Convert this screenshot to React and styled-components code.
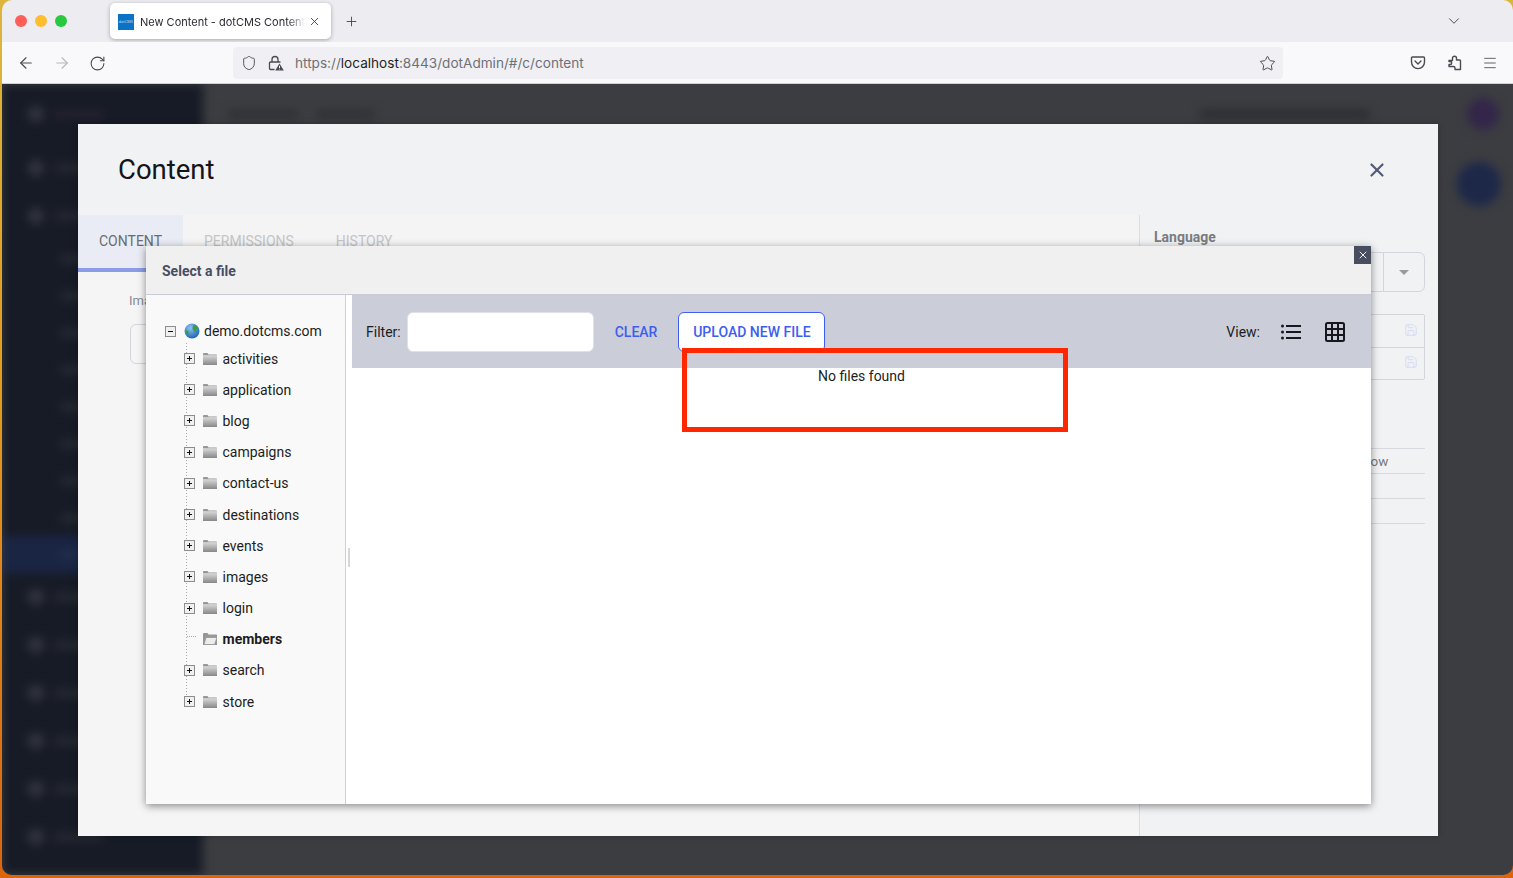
import React from 'react';
import styled, { createGlobalStyle } from 'styled-components';
import { ArrowLeft, ArrowRight, RotateCw, Shield, Star, Menu, Plus, X, ChevronDown, Save } from 'lucide-react';

const GlobalStyle = createGlobalStyle`
  html, body { margin: 0; padding: 0; height: 100%; overflow: hidden; }
  body {
    font-family: Roboto, "Liberation Sans", sans-serif;
    background: linear-gradient(180deg, #dcb63c 0%, #e39a22 45%, #d9650f 100%);
  }
  * { box-sizing: border-box; }
`;

const Screen = styled.div`
  width: 1513px;
  height: 878px;
  padding: 0 0 3px 2px;
`;

const BrowserWindow = styled.div`
  height: 100%;
  display: flex;
  flex-direction: column;
  border-radius: 10px;
  overflow: hidden;
`;

/* browser chrome */
const TabStrip = styled.div`
  height: 42px;
  flex: none;
  display: flex;
  align-items: center;
  background: #edecf1;
  padding: 0 50px 0 13px;
`;

const Light = styled.span`
  width: 12px;
  height: 12px;
  border-radius: 50%;
  margin-right: 8px;
  background: ${p => p.$color};
`;

const Tab = styled.div`
  width: 221px;
  height: 36px;
  margin: 0 13px 0 35px;
  padding: 1px 10px 0 8px;
  display: flex;
  align-items: center;
  background: #fff;
  border-radius: 5px;
  box-shadow: 0 1px 4px rgba(0, 0, 0, 0.3);
  color: #2b2a33;
`;

const Favicon = styled.span`
  width: 16px;
  height: 16px;
  flex: none;
  margin-right: 6px;
  background: #0b73c4;
  color: #bcdcf4;
  font-size: 4px;
  line-height: 16px;
  text-align: center;
  overflow: hidden;
`;

const TabTitle = styled.span`
  flex: 1;
  font-family: Inter, "Liberation Sans", sans-serif;
  font-size: 11px;
  white-space: nowrap;
  overflow: hidden;
  -webkit-mask-image: linear-gradient(90deg, #000 90%, transparent 100%);
  mask-image: linear-gradient(90deg, #000 90%, transparent 100%);
`;

const ChromeIcon = styled.span`
  display: flex;
  flex: none;
  color: ${p => p.$color || '#4a4a52'};
  margin-left: ${p => p.$left || 0}px;
`;

const Spacer = styled.div`
  flex: 1;
`;

const NavBar = styled.div`
  height: 42px;
  flex: none;
  display: flex;
  align-items: center;
  background: #f9f9fb;
  border-bottom: 1px solid #cfcfd4;
  padding: 1px 15px 0 15px;
`;

const UrlBar = styled.div`
  width: 1050px;
  height: 32px;
  margin-left: 127px;
  padding: 0 7px 0 8px;
  display: flex;
  align-items: center;
  background: #f0f0f4;
  border-radius: 4px;
`;

const UrlText = styled.span`
  margin-left: 11px;
  font-family: Inter, "Liberation Sans", sans-serif;
  font-size: 13.6px;
  color: #6f6f76;
  white-space: nowrap;
  b { font-weight: 400; color: #1f1f24; }
`;

/* blurred page behind the dialogs */
const Page = styled.div`
  flex: 1;
  position: relative;
  overflow: hidden;
  background: #3c3d41;
`;

const Backdrop = styled.div`
  height: 100%;
  display: flex;
  filter: blur(5px);
`;

const Sidebar = styled.div`
  width: 201px;
  flex: none;
  background: #171b26;
  padding-bottom: 14px;
`;

const SideRow = styled.div`
  height: ${p => p.$height}px;
  display: flex;
  align-items: center;
  padding-left: ${p => p.$indent}px;
  background: ${p => (p.$active ? '#1a2544' : 'transparent')};
`;

const Dot = styled.span`
  width: 16px;
  height: 16px;
  border-radius: 50%;
  margin-right: 10px;
  background: #32353d;
`;

const Bar = styled.span`
  height: 8px;
  width: ${p => p.$width}px;
  background: ${p => p.$color || '#262932'};
  margin-left: ${p => p.$left || 0}px;
`;

const MainArea = styled.div`
  flex: 1;
`;

const TopBar = styled.div`
  height: 60px;
  display: flex;
  align-items: center;
  padding: 0 14px 0 25px;
`;

const Avatar = styled.span`
  display: block;
  width: ${p => p.$size}px;
  height: ${p => p.$size}px;
  border-radius: 50%;
  background: ${p => p.$color};
`;

const SideAvatar = styled.div`
  display: flex;
  justify-content: flex-end;
  padding: 18px 12px 0 0;
`;

/* content modal */
const Modal = styled.div`
  position: absolute;
  left: 76px;
  top: 40px;
  width: 1360px;
  height: 712px;
  display: flex;
  flex-direction: column;
  background: #f1f2f4;
  box-shadow: 0 0 6px rgba(0, 0, 0, 0.25);
`;

const ModalHeader = styled.div`
  height: 91px;
  flex: none;
  display: flex;
  align-items: center;
  justify-content: space-between;
  padding: 0 50px 0 40px;
`;

const ModalTitle = styled.h1`
  margin: 0;
  font-size: 27.5px;
  font-weight: 400;
  color: #14151a;
`;

const ModalBody = styled.div`
  flex: 1;
  display: flex;
`;

const EditorColumn = styled.div`
  width: 1062px;
  flex: none;
  display: flex;
  flex-direction: column;
  background: #f5f5f5;
  border-right: 1px solid #dcdde2;
`;

const Tabs = styled.div`
  height: 57px;
  flex: none;
  display: flex;
  background: #f4f4f4;
`;

const TabItem = styled.div`
  padding: 18px 21px 0;
  font-size: 14px;
  color: ${p => (p.$active ? '#6b6c70' : '#c4c5c9')};
  background: ${p => (p.$active ? '#e9ecf5' : 'transparent')};
  border-bottom: 4px solid ${p => (p.$active ? '#8b9de8' : 'transparent')};
`;

const EditorForm = styled.div`
  padding: 21px 0 0 51px;
`;

const FieldLabel = styled.div`
  font-size: 13px;
  color: #8a8b90;
  margin-bottom: 16px;
`;

const FieldInput = styled.div`
  width: 300px;
  height: 40px;
  margin-left: 1px;
  background: #f5f5f5;
  border: 1px solid #d4d5dc;
  border-radius: 6px;
`;

const SidePanel = styled.div`
  flex: 1;
  padding: 14px 13px 0 14px;
`;

const PanelLabel = styled.div`
  font-size: 14px;
  font-weight: 700;
  color: #7b7c80;
  margin-bottom: 7px;
`;

const SelectBox = styled.div`
  height: 40px;
  display: flex;
  justify-content: flex-end;
  border: 1px solid #d4d5dc;
  border-radius: 6px;
  margin-bottom: 22px;
`;

const SelectArrow = styled.div`
  width: 41px;
  display: flex;
  align-items: center;
  justify-content: center;
  border-left: 1px solid #d4d5dc;
  &::after {
    content: '';
    border-left: 5px solid transparent;
    border-right: 5px solid transparent;
    border-top: 5px solid #999aa0;
  }
`;

const ActionBox = styled.div`
  border: 1px solid #d4d5dc;
  border-radius: 2px;
  margin-bottom: 68px;
`;

const ActionRow = styled.div`
  height: 32px;
  display: flex;
  align-items: center;
  justify-content: flex-end;
  padding: 0 6px 3px 0;
  color: #d0d9f5;
  & + & { border-top: 1px solid #d4d5dc; }
`;

const MetaRow = styled.div`
  height: 25px;
  padding-left: 178px;
  border-top: 1px solid #d8d9de;
  font-size: 13.5px;
  line-height: 25px;
  color: #77787c;
  white-space: nowrap;
  &:last-child { height: 1px; }
`;

/* select a file dialog */
const Dialog = styled.div`
  position: absolute;
  left: 68px;
  top: 122px;
  width: 1225px;
  height: 558px;
  display: flex;
  flex-direction: column;
  background: #fff;
  box-shadow: 0 2px 8px rgba(0, 0, 0, 0.45);
`;

const DialogTitle = styled.div`
  height: 49px;
  flex: none;
  padding: 2px 0 0 16px;
  display: flex;
  align-items: center;
  background: #f0f0f0;
  border-bottom: 1px solid #c9cbd6;
  font-size: 14px;
  font-weight: 700;
  color: #494d62;
`;

const DialogClose = styled.div`
  position: absolute;
  right: 0;
  top: 0;
  width: 17px;
  height: 18px;
  display: flex;
  align-items: center;
  justify-content: center;
  background: #494d60;
  color: #fff;
`;

const DialogBody = styled.div`
  flex: 1;
  display: flex;
  min-height: 0;
`;

const TreePane = styled.div`
  width: 200px;
  flex: none;
  padding-top: 24px;
  background: #f9f9f9;
  border-right: 1px solid #cfd0d8;
  color: #1c1d22;
  font-size: 14px;
`;

const TreeRoot = styled.div`
  height: 24px;
  padding-left: 19px;
  display: flex;
  align-items: center;
`;

const TreeList = styled.div`
  background:
    linear-gradient(#f9f9f9, #f9f9f9) no-repeat 0 100% / 100% 16px,
    linear-gradient(#a9a9a9 50%, transparent 50%) repeat-y 40px 0 / 1px 3px;
`;

const TreeRow = styled.div`
  height: 31.2px;
  padding-left: ${p => (p.$leaf ? 57 : 38)}px;
  display: flex;
  align-items: center;
  font-weight: ${p => (p.$open ? 700 : 400)};
`;

const LeafLine = styled.span`
  width: 9px;
  margin: -5px 7px 0 -16px;
  border-top: 1px dotted #a9a9a9;
`;

const SplitHandle = styled.div`
  width: 6px;
  flex: none;
  display: flex;
  align-items: center;
  justify-content: center;
  padding-top: 15px;
  background: #fff;
  &::after {
    content: '';
    width: 2px;
    height: 19px;
    background: #d6d7dd;
  }
`;

const FilesPane = styled.div`
  flex: 1;
  display: flex;
  flex-direction: column;
`;

const FilesToolbar = styled.div`
  height: 73px;
  flex: none;
  display: flex;
  align-items: center;
  padding: 0 26px 0 14px;
  background: #cbced8;
  color: #1c1d22;
  font-size: 14px;
`;

const FilterInput = styled.input`
  width: 187px;
  height: 40px;
  margin-left: 6px;
  background: #fff;
  border: 1px solid #dfe1e8;
  border-radius: 6px;
  outline: none;
`;

const ClearLink = styled.span`
  margin: 0 21px 0 21px;
  color: #3d5ef0;
  font-weight: 500;
`;

const UploadButton = styled.button`
  width: 147px;
  height: 40px;
  padding: 0;
  background: #fff;
  border: 1px solid #3d5ef0;
  border-radius: 6px;
  color: #3d5ef0;
  font-family: inherit;
  font-size: 14px;
  font-weight: 500;
`;

const ViewIcon = styled.span`
  display: flex;
  margin-left: ${p => p.$left}px;
`;

const EmptyMessage = styled.div`
  text-align: center;
  font-size: 14px;
  line-height: 17px;
  color: #1c1d22;
`;

const Annotation = styled.div`
  position: absolute;
  left: 536px;
  top: 102px;
  width: 386px;
  height: 84px;
  border: 5px solid #ff2600;
  pointer-events: none;
`;

const PocketIcon = () => (
  <svg width="16" height="16" viewBox="0 0 16 16" fill="none" stroke="currentColor" strokeWidth="1.4" strokeLinecap="round" strokeLinejoin="round">
    <path d="M2.4 2h11.2c.5 0 .9.4.9.9V7c0 3.700-2.900 6.600-6.500 6.600S1.500 10.700 1.500 7V2.900c0-.5.4-.9.9-.9z" />
    <path d="M5 6l3 3 3-3" />
  </svg>
);

const PuzzleIcon = () => (
  <svg width="16" height="16" viewBox="0 0 16 16" fill="none" stroke="currentColor" strokeWidth="1.4" strokeLinejoin="round">
    <path d="M2 5.500h3.500V3.200a2 2 0 0 1 4 0v1.800h3.200c.4 0 .8.400.8.800v8.700h-5.500v-1.500a1.500 1.500 0 0 0-1.500-1.500H2v-2h1.200a1.500 1.500 0 0 0 0-3H2z" />
  </svg>
);

const LockWarnIcon = () => (
  <svg width="16" height="16" viewBox="0 0 16 16" fill="none">
    <path d="M4 7V4.500a3 3 0 0 1 6 0V7" stroke="#4a4a52" strokeWidth="1.3" />
    <path d="M6.500 14.500H2.500a1 1 0 0 1-1-1V8a1 1 0 0 1 1-1h9a1 1 0 0 1 .9.6" stroke="#4a4a52" strokeWidth="1.3" />
    <path d="M11.500 8.500l4.300 7h-8.600z" fill="#4a4a52" />
    <path d="M11.500 10.800v2.200M11.500 13.700v.7" stroke="#fff" strokeWidth="1" />
  </svg>
);

const ExpandBox = ({ open }) => (
  <svg width="11" height="11" viewBox="0 0 11 11">
    <rect x=".5" y=".5" width="10" height="10" fill="#f0f0f0" stroke="#8d8d8d" />
    <path d={open ? 'M3 5.500h5' : 'M3 5.500h5M5.500 3v5'} stroke="#111" strokeWidth="1" />
  </svg>
);

const FolderIcon = ({ open }) => (
  <svg width="14" height="12" viewBox="0 0 14 12">
    <defs>
      <linearGradient id="folderFill" x1="0" y1="0" x2="0" y2="1">
        <stop offset="0" stopColor="#dadada" />
        <stop offset="1" stopColor="#878787" />
      </linearGradient>
    </defs>
    <path d="M0 1.200C0 .5.500 0 1 0h3.500l1 1.500H13c.5 0 1 .4 1 1V12H0z" fill="#979797" />
    {open
      ? <path d="M3 4.500h11l-2.500 7H1z" fill="#ececec" stroke="#8a8a8a" strokeWidth=".6" />
      : <rect x="0" y="2.200" width="14" height="9.800" fill="url(#folderFill)" />}
  </svg>
);

const GlobeIcon = () => (
  <svg width="16" height="16" viewBox="0 0 16 16">
    <defs>
      <radialGradient id="globeFill" cx=".4" cy=".3" r=".8">
        <stop offset="0" stopColor="#8cc4f2" />
        <stop offset="1" stopColor="#1259b4" />
      </radialGradient>
    </defs>
    <circle cx="8" cy="8" r="7.500" fill="url(#globeFill)" />
    <path d="M9 2.500l3-.3 2 3-2 1 .5 2.300-1.500 1.500-1-2.500-1.500-1zM2 7l2 1 .7 2-.7 2.500L2.500 11z" fill="#3f9a3c" />
  </svg>
);

const ListIcon = () => (
  <svg width="20" height="16" viewBox="0 0 20 16" fill="#17181d">
    <circle cx="1.500" cy="2" r="1.500" />
    <circle cx="1.500" cy="8" r="1.500" />
    <circle cx="1.500" cy="14" r="1.500" />
    <rect x="5" y="1" width="15" height="2" />
    <rect x="5" y="7" width="15" height="2" />
    <rect x="5" y="13" width="15" height="2" />
  </svg>
);

const GridIcon = () => (
  <svg width="20" height="20" viewBox="0 0 20 20" fill="none" stroke="#17181d" strokeWidth="2">
    <rect x="1" y="1" width="18" height="18" rx="1.500" />
    <path d="M7 1v18M13 1v18M1 7h18M1 13h18" />
  </svg>
);

const folders = ['activities', 'application', 'blog', 'campaigns', 'contact-us', 'destinations', 'events', 'images', 'login', 'members', 'search', 'store'];

const sideRows = [
  { height: 60, indent: 26, dot: true, bar: 50, left: 60, color: '#262230' },
  { height: 48, indent: 26, dot: true, bar: 60 },
  { height: 48, indent: 26, dot: true, bar: 60 },
  ...[70, 60, 80, 60, 70, 80, 60, 50].map(bar => ({ height: 37, indent: 58, bar })),
  { height: 37, indent: 58, bar: 60, active: true, color: '#232d4c' },
  ...[60, 70, 60, 70, 60].map(bar => ({ height: 48, indent: 26, dot: true, bar })),
  { height: 48, indent: 26, dot: true, bar: 50 },
];

const App = () => {
  return (
    <Screen>
      <GlobalStyle />
      <BrowserWindow>
        <TabStrip>
          <Light $color="#ff5f57" />
          <Light $color="#febc2e" />
          <Light $color="#28c840" />
          <Tab>
            <Favicon>dotCMS</Favicon>
            <TabTitle>New Content - dotCMS Content</TabTitle>
            <ChromeIcon $color="#2b2a33" $left={3}><X size={13} strokeWidth={1.5} /></ChromeIcon>
          </Tab>
          <ChromeIcon><Plus size={15} strokeWidth={1.5} /></ChromeIcon>
          <Spacer />
          <ChromeIcon><ChevronDown size={18} strokeWidth={1.3} /></ChromeIcon>
        </TabStrip>

        <NavBar>
          <ChromeIcon><ArrowLeft size={18} strokeWidth={1.5} /></ChromeIcon>
          <ChromeIcon $color="#b8b8bd" $left={18}><ArrowRight size={18} strokeWidth={1.5} /></ChromeIcon>
          <ChromeIcon $left={18}><RotateCw size={17} strokeWidth={1.5} /></ChromeIcon>
          <UrlBar>
            <ChromeIcon><Shield size={16} strokeWidth={1.4} /></ChromeIcon>
            <ChromeIcon $left={11}><LockWarnIcon /></ChromeIcon>
            <UrlText>https://<b>localhost</b>:8443/dotAdmin/#/c/content</UrlText>
            <Spacer />
            <ChromeIcon><Star size={17} strokeWidth={1.4} /></ChromeIcon>
          </UrlBar>
          <Spacer />
          <ChromeIcon><PocketIcon /></ChromeIcon>
          <ChromeIcon $left={21}><PuzzleIcon /></ChromeIcon>
          <ChromeIcon $left={19}><Menu size={16} strokeWidth={1.3} /></ChromeIcon>
        </NavBar>

        <Page>
          <Backdrop>
            <Sidebar>
              {sideRows.map((row, i) => (
                <SideRow key={i} $height={row.height} $indent={row.indent} $active={row.active}>
                  {row.dot && <Dot />}
                  <Bar $width={row.bar} $color={row.color} />
                </SideRow>
              ))}
            </Sidebar>
            <MainArea>
              <TopBar>
                <Bar $width={70} $color="#2e2f33" />
                <Bar $width={58} $left={18} $color="#2e2f33" />
                <Spacer />
                <Bar $width={170} $color="#2a2b2f" />
                <Bar $width={0} $left={97} />
                <Avatar $size={32} $color="#33264a" />
              </TopBar>
              <SideAvatar>
                <Avatar $size={44} $color="#1d2849" />
              </SideAvatar>
            </MainArea>
          </Backdrop>

          <Modal>
            <ModalHeader>
              <ModalTitle>Content</ModalTitle>
              <ChromeIcon $color="#535a75"><X size={22} strokeWidth={2.4} /></ChromeIcon>
            </ModalHeader>
            <ModalBody>
              <EditorColumn>
                <Tabs>
                  <TabItem $active>CONTENT</TabItem>
                  <TabItem>PERMISSIONS</TabItem>
                  <TabItem>HISTORY</TabItem>
                </Tabs>
                <EditorForm>
                  <FieldLabel>Image</FieldLabel>
                  <FieldInput />
                </EditorForm>
              </EditorColumn>
              <SidePanel>
                <PanelLabel>Language</PanelLabel>
                <SelectBox><SelectArrow /></SelectBox>
                <ActionBox>
                  <ActionRow><Save size={14} strokeWidth={1.5} /></ActionRow>
                  <ActionRow><Save size={14} strokeWidth={1.5} /></ActionRow>
                </ActionBox>
                <MetaRow>Workflow</MetaRow>
                <MetaRow />
                <MetaRow />
                <MetaRow />
              </SidePanel>
            </ModalBody>

            <Dialog>
              <DialogTitle>Select a file</DialogTitle>
              <DialogClose><X size={12} strokeWidth={1.8} /></DialogClose>
              <DialogBody>
                <TreePane>
                  <TreeRoot>
                    <ExpandBox open />
                    <ChromeIcon $left={8}><GlobeIcon /></ChromeIcon>
                    <ChromeIcon $left={4} $color="#1c1d22">demo.dotcms.com</ChromeIcon>
                  </TreeRoot>
                  <TreeList>
                    {folders.map(name => {
                      const open = name === 'members';
                      return (
                        <TreeRow key={name} $leaf={open} $open={open}>
                          {open ? <LeafLine /> : <ExpandBox />}
                          <ChromeIcon $left={open ? 0 : 8}><FolderIcon open={open} /></ChromeIcon>
                          <ChromeIcon $left={5.5} $color="#1c1d22">{name}</ChromeIcon>
                        </TreeRow>
                      );
                    })}
                  </TreeList>
                </TreePane>
                <SplitHandle />
                <FilesPane>
                  <FilesToolbar>
                    Filter:
                    <FilterInput />
                    <ClearLink>CLEAR</ClearLink>
                    <UploadButton>UPLOAD NEW FILE</UploadButton>
                    <Spacer />
                    View:
                    <ViewIcon $left={21}><ListIcon /></ViewIcon>
                    <ViewIcon $left={24}><GridIcon /></ViewIcon>
                  </FilesToolbar>
                  <EmptyMessage>No files found</EmptyMessage>
                </FilesPane>
              </DialogBody>
              <Annotation />
            </Dialog>
          </Modal>
        </Page>
      </BrowserWindow>
    </Screen>
  );
};

export default App;
